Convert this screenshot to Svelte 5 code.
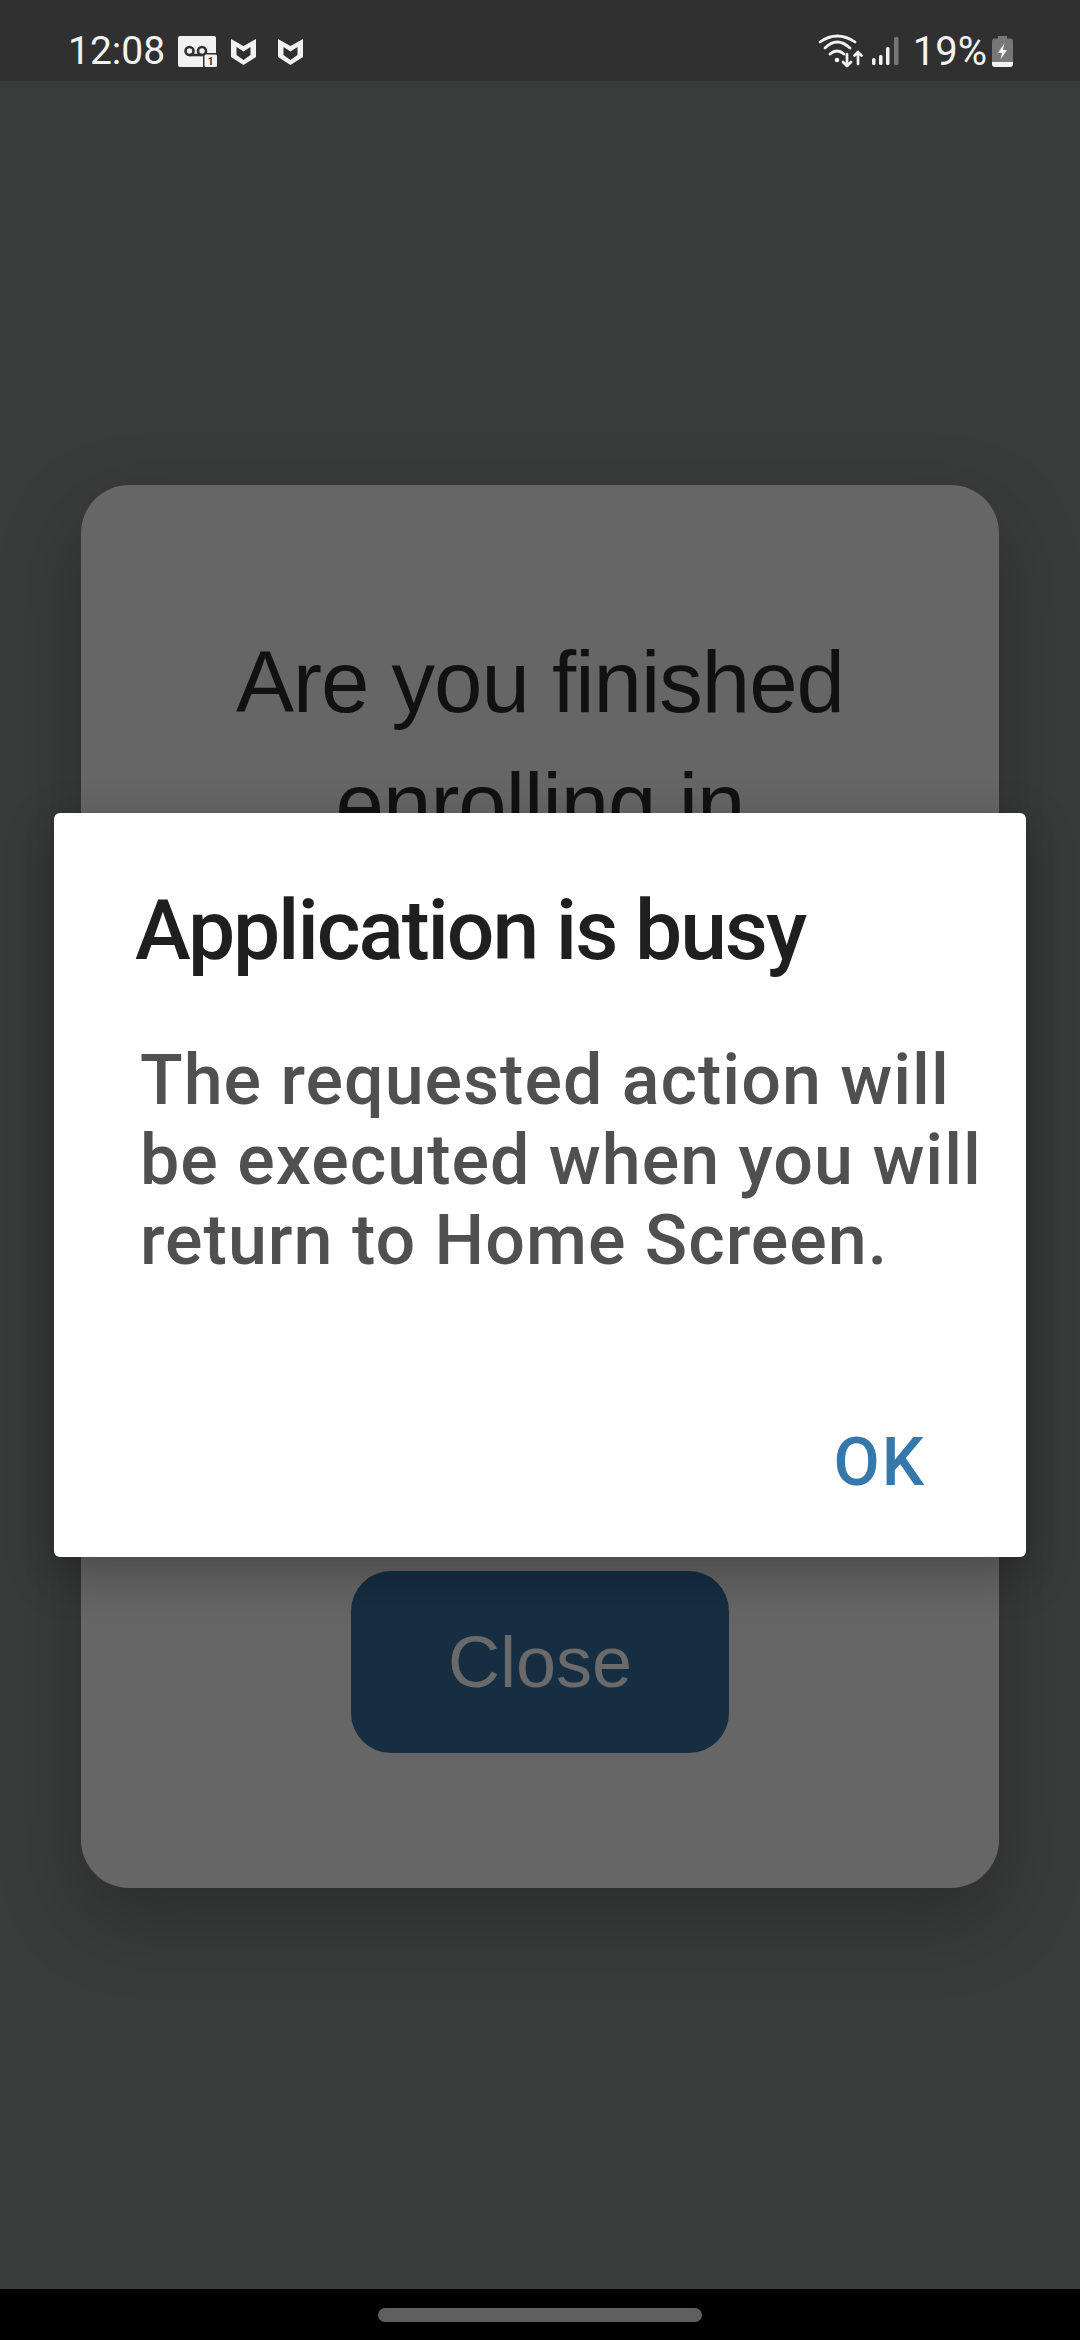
<script>
	const bars = [
		{ x: 0, y: 21, w: 3.5, h: 7, on: true },
		{ x: 7, y: 18, w: 3.5, h: 10, on: true },
		{ x: 14, y: 10, w: 3.5, h: 18, on: true },
		{ x: 22, y: 0, w: 4.5, h: 28, on: false }
	];
	const shield = 'M0 1L12.5 8L25 1V19L12.5 27L0 19Z';
	const shieldInner = 'M5.5 9L12.5 13.5L19.5 9V17L12.5 22L5.5 17Z';
</script>

<div class="screen">
	<header class="status">
		<div class="status-group">
			<span class="clock">12:08</span>
			<svg class="ic-voicemail" viewBox="0 0 39 31" aria-hidden="true">
				<path d="M2 0h34a2 2 0 0 1 2 2v15H28a3 3 0 0 0-3 3v11H2a2 2 0 0 1-2-2V2a2 2 0 0 1 2-2z" fill="#f2f2f2" />
				<g fill="none" stroke="#303030" stroke-width="2.6">
					<circle cx="11.500" cy="15" r="4" />
					<circle cx="24" cy="15" r="4" />
					<path d="M11.500 19H24" />
				</g>
				<rect x="26.500" y="18.500" width="12.500" height="12.500" rx="1.500" fill="#f2f2f2" />
				<text x="32.700" y="29" class="badge-num">1</text>
			</svg>
			<svg class="ic-shield" viewBox="0 0 25 27" aria-hidden="true">
				<path d={shield} fill="#f2f2f2" />
				<path d={shieldInner} fill="#303030" />
			</svg>
			<svg class="ic-shield second" viewBox="0 0 25 27" aria-hidden="true">
				<path d={shield} fill="#f2f2f2" />
				<path d={shieldInner} fill="#303030" />
			</svg>
		</div>
		<div class="status-group">
			<svg class="ic-wifi" viewBox="0 0 46 34" aria-hidden="true">
				<g fill="none" stroke="#f2f2f2" stroke-width="2.700" stroke-linecap="round" stroke-linejoin="round">
					<path d="M3 8Q20 -4 38 8" />
					<path d="M8 14Q20 2 33 14" />
					<path d="M13 20Q20 14 27 20" />
					<path d="M30 20V32M26 28L30 32L34 28" />
					<path d="M41 30V18M37.500 21.500L41 18L44.500 21.500" />
				</g>
				<circle cx="20" cy="26" r="2.300" fill="#f2f2f2" />
			</svg>
			<svg class="ic-signal" viewBox="0 0 27 28" aria-hidden="true">
				{#each bars as b}
					<rect x={b.x} y={b.y} width={b.w} height={b.h} rx="1.500" fill={b.on ? '#f2f2f2' : '#777'} />
				{/each}
			</svg>
			<span class="pct">19%</span>
			<svg class="ic-battery" viewBox="0 0 21 31" aria-hidden="true">
				<path d="M6 0h9v2.500h3a3 3 0 0 1 3 3V26H0V5.500a3 3 0 0 1 3-3h3z" fill="#777" />
				<path d="M0 26h21v2a3 3 0 0 1-3 3H3a3 3 0 0 1-3-3z" fill="#f2f2f2" />
				<path d="M12.500 7L6 17h4l-1.500 6.500L15 14h-4z" fill="#f2f2f2" />
			</svg>
		</div>
	</header>

	<main class="backdrop">
		<section class="card">
			<div class="card-title">
				<div>Are you finished</div>
				<div>enrolling in</div>
			</div>
			<div class="card-btn">Close</div>
		</section>

		<div class="dialog" role="dialog">
			<h2>Application is busy</h2>
			<p>The requested action will be executed when you will return to Home Screen.</p>
			<div class="actions"><span class="ok">OK</span></div>
		</div>
	</main>

	<footer class="nav"><span class="pill"></span></footer>
</div>

<style>
	:global(body) {
		margin: 0;
		background: #000;
	}

	.screen {
		width: 1080px;
		height: 2340px;
		display: flex;
		flex-direction: column;
		overflow: hidden;
	}

	.status {
		height: 81px;
		flex: none;
		background: #303030;
		display: flex;
		justify-content: space-between;
		padding: 21px 67px 0 68px;
		box-sizing: border-box;
	}

	.status-group {
		display: flex;
		align-items: center;
		height: 100%;
	}

	.clock {
		font-family: Roboto, sans-serif;
		font-size: 39px;
		color: #f2f2f2;
	}

	.pct {
		font-family: Roboto, sans-serif;
		font-size: 40px;
		color: #f2f2f2;
		margin-left: 14px;
	}

	.ic-voicemail {
		width: 39px;
		height: 31px;
		margin-left: 13px;
	}

	.badge-num {
		font-family: Roboto, sans-serif;
		font-size: 10px;
		font-weight: 700;
		text-anchor: middle;
		fill: #303030;
	}

	.ic-shield {
		width: 25px;
		height: 27px;
		margin-left: 14px;
	}

	.ic-shield.second {
		margin-left: 22px;
	}

	.ic-wifi {
		width: 46px;
		height: 34px;
	}

	.ic-signal {
		width: 27px;
		height: 28px;
		margin-left: 9px;
	}

	.ic-battery {
		width: 21px;
		height: 31px;
		margin-left: 5px;
	}

	.backdrop {
		flex: 1;
		position: relative;
		background: #3a3b3b;
		display: flex;
		justify-content: center;
		padding-top: 404px;
		box-sizing: border-box;
	}

	.card {
		width: 918px;
		height: 1403px;
		box-sizing: border-box;
		background: #666;
		border-radius: 48px;
		box-shadow: 0 30px 80px rgb(0 0 0 / 0.25);
		display: flex;
		flex-direction: column;
		align-items: center;
		padding-top: 136px;
	}

	.card-title {
		font-family: 'Liberation Sans', sans-serif;
		font-size: 87px;
		line-height: 122px;
		letter-spacing: -1px;
		color: #111;
		text-align: center;
	}

	.card-btn {
		margin-top: auto;
		margin-bottom: 135px;
		width: 378px;
		height: 182px;
		border-radius: 40px;
		background: #152e42;
		color: #6a6a6a;
		font-family: 'Liberation Sans', sans-serif;
		font-size: 72px;
		display: flex;
		align-items: center;
		justify-content: center;
	}

	.dialog {
		position: absolute;
		left: 54px;
		top: 732px;
		width: 972px;
		height: 744px;
		box-sizing: border-box;
		background: #fff;
		border-radius: 6px;
		box-shadow: 0 16px 48px rgb(0 0 0 / 0.3);
		padding: 73px 32px 0 81px;
		display: flex;
		flex-direction: column;
	}

	h2 {
		margin: 0;
		font-family: Roboto, sans-serif;
		font-weight: 500;
		font-size: 84px;
		line-height: 90px;
		letter-spacing: -2.1px;
		color: #1f1f1f;
	}

	p {
		margin: 64px 0 0 5px;
		font-family: Roboto, sans-serif;
		font-weight: 500;
		font-size: 70px;
		line-height: 80px;
		letter-spacing: 1px;
		color: #505050;
	}

	.actions {
		margin-top: auto;
		margin-bottom: 56px;
		display: flex;
		justify-content: flex-end;
		padding-right: 68px;
	}

	.ok {
		font-family: Roboto, sans-serif;
		font-weight: 500;
		font-size: 67px;
		letter-spacing: 2px;
		color: #3778aa;
	}

	.nav {
		height: 51px;
		flex: none;
		background: #000;
		display: flex;
		justify-content: center;
		padding-top: 19px;
		box-sizing: border-box;
	}

	.pill {
		width: 324px;
		height: 14px;
		border-radius: 7px;
		background: #5f5f5f;
	}
</style>
